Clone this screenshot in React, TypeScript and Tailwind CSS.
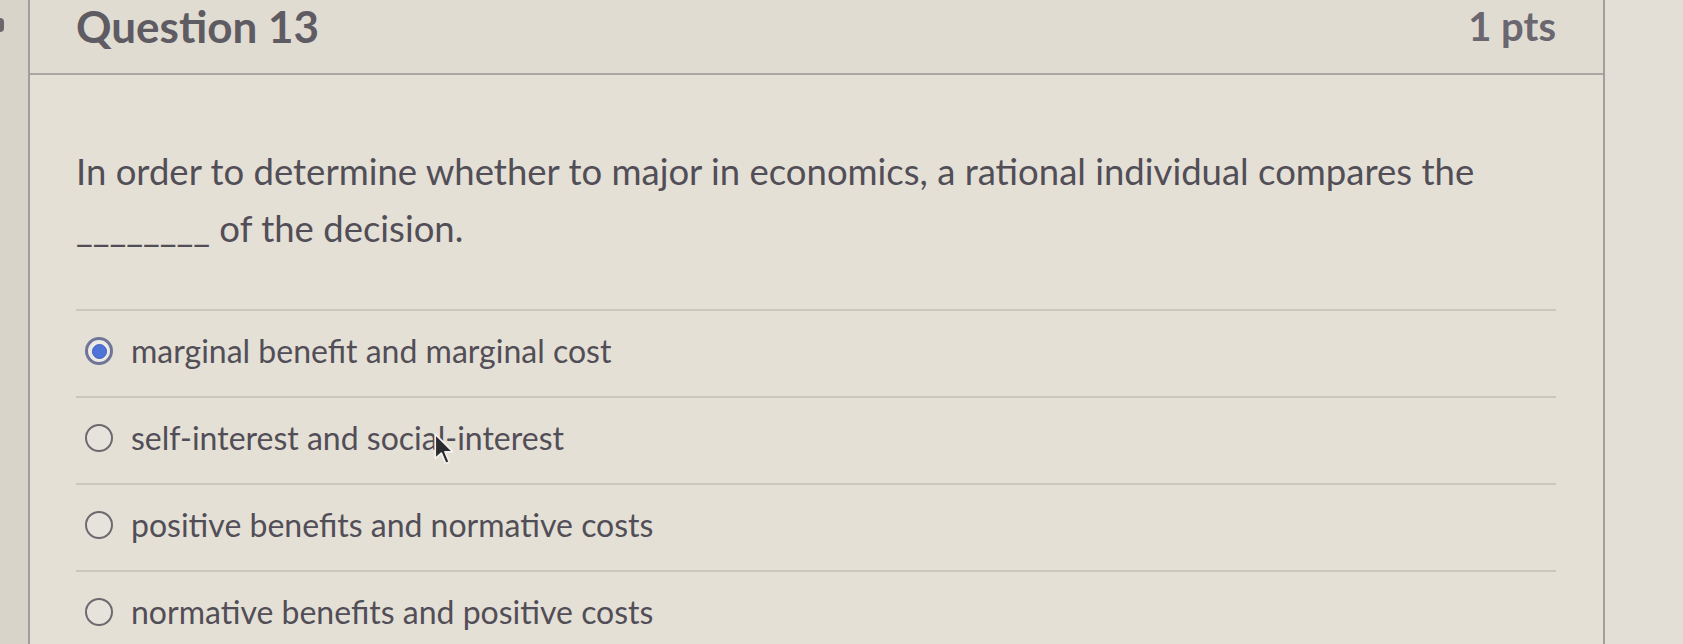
import React from "react";

// ===== Types =====
type Option = {
  label: React.ReactNode;
  selected?: boolean;
};

// ===== Cursor overlay =====
function Cursor() {
  return (
    <svg
      width="22"
      height="36"
      viewBox="0 0 18 28"
      className="absolute left-[-4px] top-[14px]"
    >
      <path
        d="M1 1 L1 21 L6 16.5 L9.5 25 L12.5 23.8 L9 15.5 L15.5 15.5 Z"
        fill="#2b2a2e"
        stroke="#f4f2ee"
        strokeWidth="1.4"
        strokeLinejoin="round"
      />
    </svg>
  );
}

// ===== Radio =====
function Radio({ selected }: { selected?: boolean }) {
  if (selected) {
    return (
      <span className="flex h-[28px] w-[28px] shrink-0 items-center justify-center rounded-full border-[3px] border-[#6f7597] bg-[#eceae6]">
        <span className="h-[15px] w-[15px] rounded-full border border-[#3f5fb8] bg-[#4f74d8]" />
      </span>
    );
  }
  return (
    <span className="h-[28px] w-[28px] shrink-0 rounded-full border-[2px] border-[#6d696f] bg-[#e6e3dc]" />
  );
}

const options: Option[] = [
  { label: "marginal benefit and marginal cost", selected: true },
  {
    label: (
      <>
        self-interest and socia
        <span className="relative">
          l
          <Cursor />
        </span>
        -interest
      </>
    ),
  },
  { label: "positive benefits and normative costs" },
  { label: "normative benefits and positive costs" },
];

// ===== Component =====
export default function App() {
  return (
    <div
      className="flex h-[644px] w-[1683px] overflow-hidden bg-[#dedad1] text-[#524e57]"
      style={{ fontFamily: "Lato, 'Open Sans', sans-serif" }}
    >
      {/* Left gutter */}
      <div className="relative w-[28px] shrink-0 bg-[#d8d4ca]">
        <span className="absolute left-0 top-[18px] h-[14px] w-[4px] rounded-r-full bg-[#6b676c]" />
      </div>

      {/* Question card */}
      <div className="flex w-[1577px] shrink-0 flex-col border-x-[2px] border-[#a29e9b] bg-[#e4e0d6]">
        {/* Header */}
        <div className="flex h-[75px] shrink-0 items-start justify-between border-b-[2px] border-[#aaa6a2] bg-[#e0dcd2] pl-[46px] pr-[47px] pt-[4px]">
          <h2 className="text-[44px] font-bold leading-[44px] text-[#5e5b63]">
            Question 13
          </h2>
          <span className="text-[40px] font-bold leading-[44px] text-[#6a6770]">
            1 pts
          </span>
        </div>

        {/* Body */}
        <div className="flex flex-col pl-[46px] pr-[47px] pt-[68px]">
          <p className="text-[36.5px] leading-[57px]">
            In order to determine whether to major in economics, a rational
            individual compares the
            <br />
            ________ of the decision.
          </p>

          <div className="mt-[52px] flex flex-col">
            {options.map((option, index) => (
              <div
                key={index}
                className="flex h-[87px] items-center gap-[18px] border-t-[2px] border-[#cbc7bf] pb-[5px] pl-[9px]"
              >
                <Radio selected={option.selected} />
                <span className="text-[32px] leading-none">{option.label}</span>
              </div>
            ))}
          </div>
        </div>
      </div>

      {/* Right gutter */}
      <div className="flex-1 bg-[#e3dfd6]" />
    </div>
  );
}
